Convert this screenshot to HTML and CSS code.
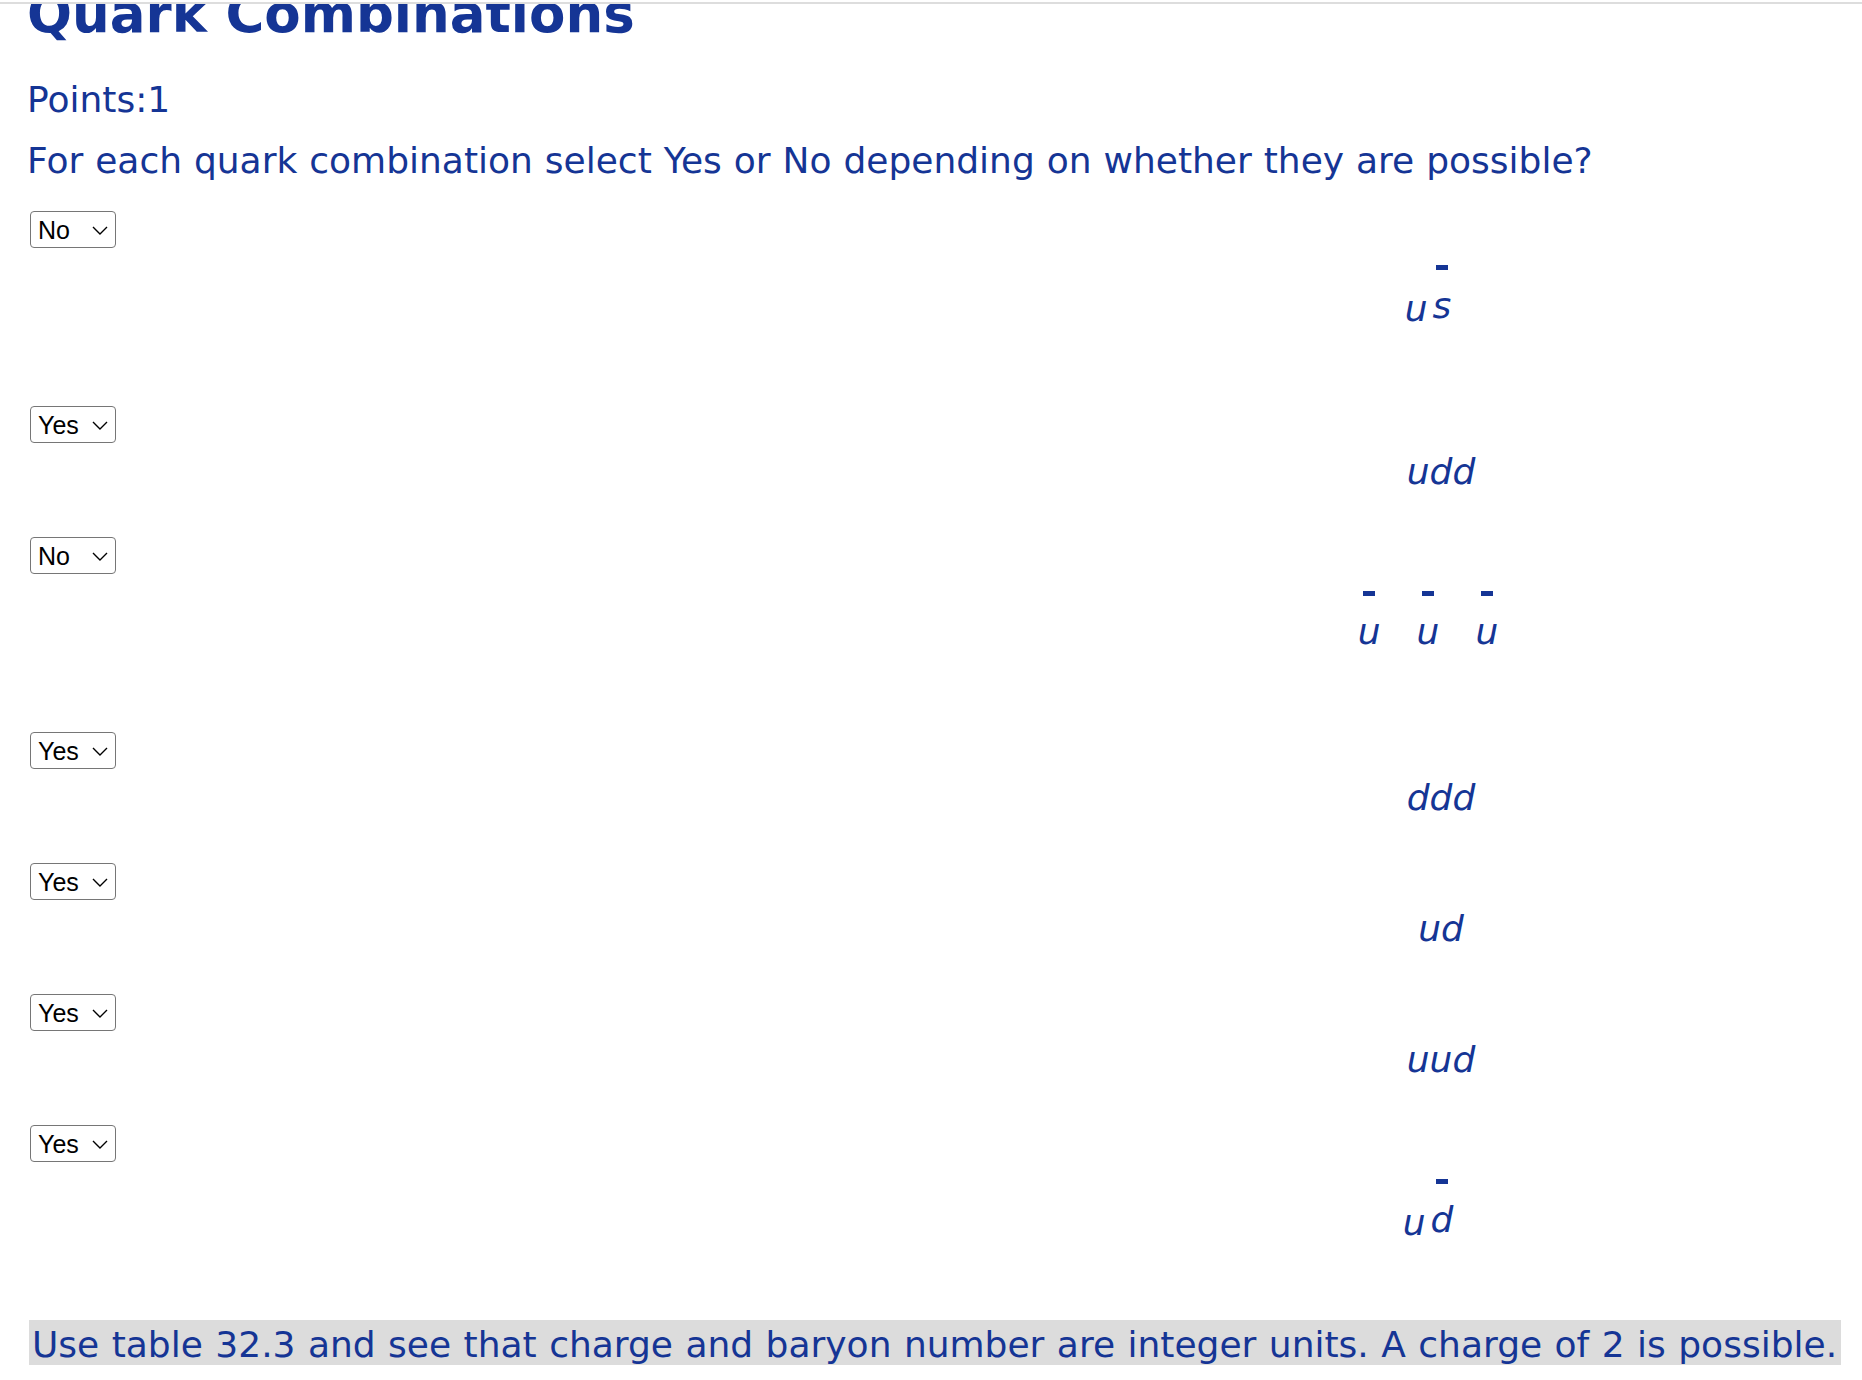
FILE: index.html
```html
<!DOCTYPE html>
<html lang="en">
<head>
    <meta charset="UTF-8">
    <meta name="viewport" content="width=device-width, initial-scale=1.0">
    <title>Quark Combinations</title>
    <link rel="stylesheet" href="styles.css">
</head>
<body>
    <div class="viewport">
        <h1>Quark Combinations</h1>
        <p class="points">Points:1</p>
        <p class="question">For each quark combination select Yes or No depending on whether they are possible?</p>

        <div class="item">
            <span class="choice">
                <select>
                    <option>Yes</option>
                    <option selected>No</option>
                </select>
                <svg class="arrow" width="16" height="9" viewBox="0 0 16 9"><polyline points="1,1 8,8 15,1" fill="none" stroke="#000" stroke-width="1.4"/></svg>
            </span>
            <div class="formula over"><i>u</i><i class="bar">s</i></div>
        </div>

        <div class="item">
            <span class="choice">
                <select>
                    <option selected>Yes</option>
                    <option>No</option>
                </select>
                <svg class="arrow" width="16" height="9" viewBox="0 0 16 9"><polyline points="1,1 8,8 15,1" fill="none" stroke="#000" stroke-width="1.4"/></svg>
            </span>
            <div class="formula"><i>udd</i></div>
        </div>

        <div class="item">
            <span class="choice">
                <select>
                    <option>Yes</option>
                    <option selected>No</option>
                </select>
                <svg class="arrow" width="16" height="9" viewBox="0 0 16 9"><polyline points="1,1 8,8 15,1" fill="none" stroke="#000" stroke-width="1.4"/></svg>
            </span>
            <div class="formula over spread"><i class="bar">u</i><i class="bar">u</i><i class="bar">u</i></div>
        </div>

        <div class="item">
            <span class="choice">
                <select>
                    <option selected>Yes</option>
                    <option>No</option>
                </select>
                <svg class="arrow" width="16" height="9" viewBox="0 0 16 9"><polyline points="1,1 8,8 15,1" fill="none" stroke="#000" stroke-width="1.4"/></svg>
            </span>
            <div class="formula"><i>ddd</i></div>
        </div>

        <div class="item">
            <span class="choice">
                <select>
                    <option selected>Yes</option>
                    <option>No</option>
                </select>
                <svg class="arrow" width="16" height="9" viewBox="0 0 16 9"><polyline points="1,1 8,8 15,1" fill="none" stroke="#000" stroke-width="1.4"/></svg>
            </span>
            <div class="formula"><i>ud</i></div>
        </div>

        <div class="item">
            <span class="choice">
                <select>
                    <option selected>Yes</option>
                    <option>No</option>
                </select>
                <svg class="arrow" width="16" height="9" viewBox="0 0 16 9"><polyline points="1,1 8,8 15,1" fill="none" stroke="#000" stroke-width="1.4"/></svg>
            </span>
            <div class="formula"><i>uud</i></div>
        </div>

        <div class="item">
            <span class="choice">
                <select>
                    <option selected>Yes</option>
                    <option>No</option>
                </select>
                <svg class="arrow" width="16" height="9" viewBox="0 0 16 9"><polyline points="1,1 8,8 15,1" fill="none" stroke="#000" stroke-width="1.4"/></svg>
            </span>
            <div class="formula over"><i>u</i><i class="bar">d</i></div>
        </div>

        <div class="feedback">Use table 32.3 and see that charge and baryon number are integer units. A charge of 2 is possible.</div>
    </div>
</body>
</html>
```

FILE: styles.css
```css
body {
    margin: 0;
    font-family: "DejaVu Sans", Verdana, sans-serif;
    color: #153595;
}
.viewport {
    margin-top: 2px;
    border-top: 2px solid #dddddd;
    height: 1376px;
    overflow: hidden;
    padding: 0 21px 0 27px;
    box-sizing: border-box;
}
h1 {
    margin: -20px 0 0;
    font-size: 53px;
    line-height: 60px;
    font-weight: bold;
}
.points {
    margin: 35px 0 0;
    font-size: 36px;
    line-height: 42px;
}
.question {
    margin: 19px 0 0;
    font-size: 36px;
    line-height: 42px;
    word-spacing: 0.5px;
}
.item {
    display: grid;
    grid-template-columns: 1fr 800px;
}
.item:first-of-type {
    margin-top: 29px;
}
.choice {
    grid-column: 1;
    grid-row: 1;
    position: relative;
    justify-self: start;
    margin-left: 3px;
    height: 37px;
}
.choice select {
    appearance: none;
    -webkit-appearance: none;
    width: 86px;
    height: 37px;
    box-sizing: border-box;
    padding: 0 0 0 7px;
    border: 1px solid #767676;
    border-radius: 4px;
    background: #fff;
    color: #000;
    font-family: "Liberation Sans", Arial, sans-serif;
    font-size: 25px;
}
.choice .arrow {
    position: absolute;
    right: 8px;
    top: 15px;
    pointer-events: none;
}
.formula {
    grid-column: 2;
    grid-row: 2;
    text-align: center;
    font-size: 36px;
    line-height: 42px;
    margin: 8px 0 44px;
}
.formula i {
    font-style: italic;
}
.formula.over {
    margin: 17px 0 76px;
    padding-right: 26px;
}
.formula .bar {
    display: inline-block;
    margin-left: 5px;
    vertical-align: 3px;
}
.formula .bar::before {
    content: "";
    display: block;
    width: 12px;
    height: 5px;
    margin: 0 auto 15px;
    background: currentColor;
}
.formula.spread .bar {
    margin: 0 18px;
}
.feedback {
    display: inline-block;
    margin-left: 2px;
    padding: 4px 4px 0 3px;
    font-size: 36px;
    line-height: 41px;
    word-spacing: 1px;
    white-space: nowrap;
    background: #dcdcdc;
}
```
